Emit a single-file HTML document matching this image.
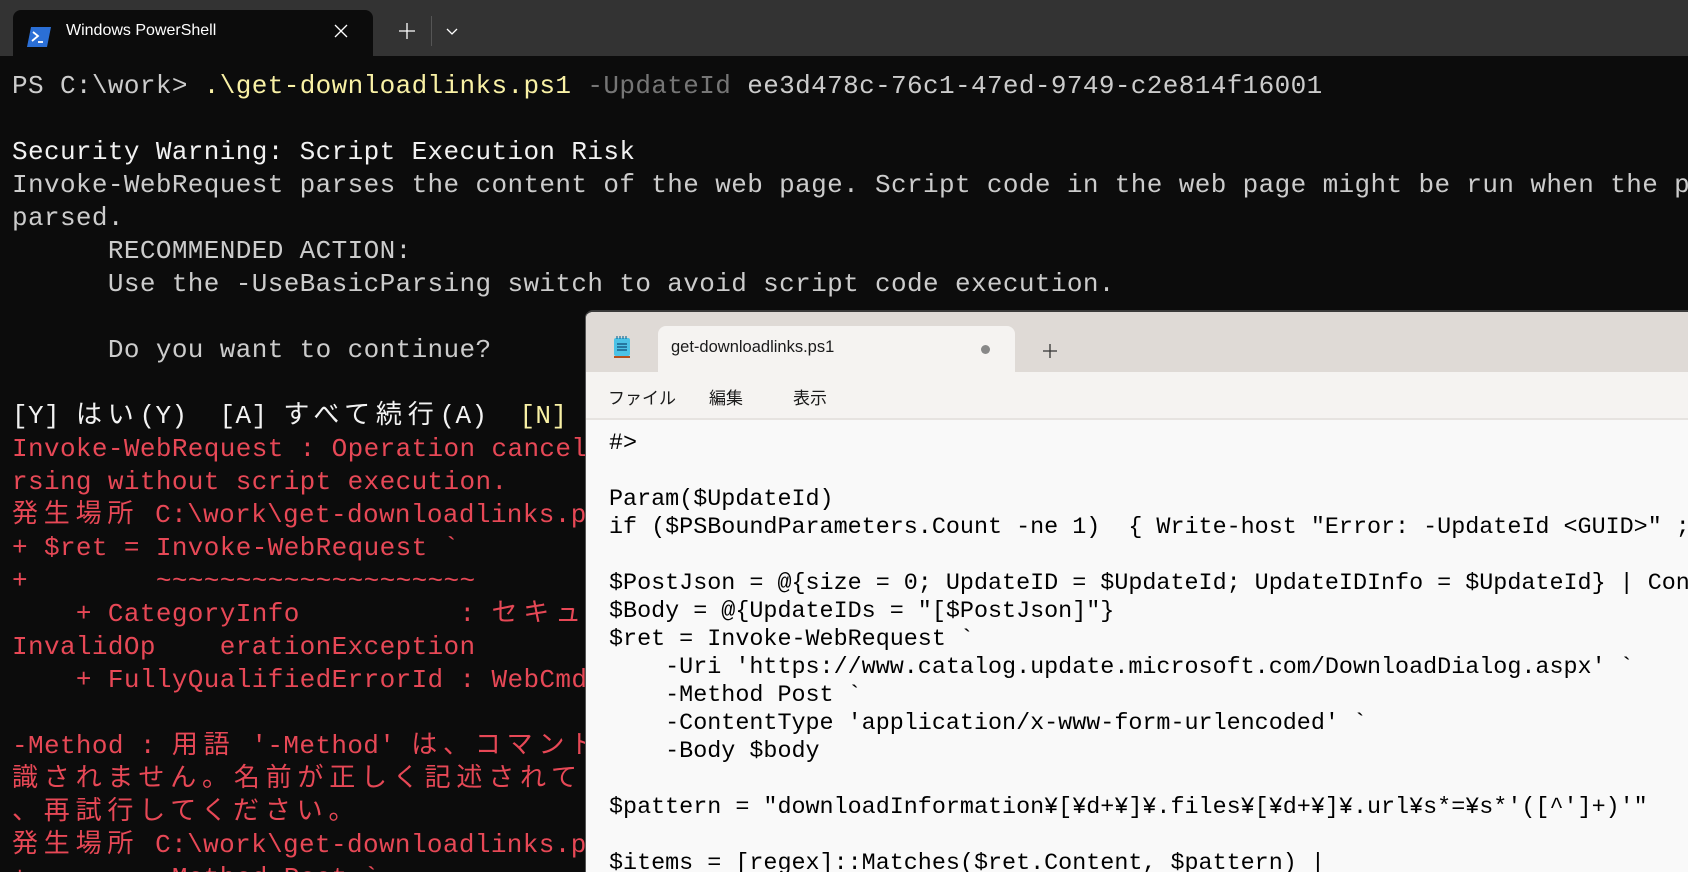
<!DOCTYPE html>
<html><head><meta charset="utf-8">
<style>
*{margin:0;padding:0;box-sizing:border-box}
html,body{width:1688px;height:872px;overflow:hidden;background:#0c0c0c}
body{position:relative;font-family:"Liberation Sans","Noto Sans CJK JP",sans-serif}
#tabbar{position:absolute;left:0;top:0;width:1688px;height:56px;background:#333}
#tab{position:absolute;left:13px;top:10px;width:360px;height:46px;background:#0c0c0c;border-radius:8px 8px 0 0}
#tab .t{position:absolute;left:53px;top:12px;color:#fff;font-size:16px}
#term{position:absolute;left:12px;top:70px;width:1676px;height:802px;overflow:hidden;font-family:"Liberation Mono","Noto Sans CJK JP",monospace;font-size:26px;line-height:33px;letter-spacing:0.38px;color:#ccc;white-space:pre}
.y{color:#f9f1a5}.g{color:#767676}.r{color:#e74856}
.w{letter-spacing:5.8px}
#np{position:absolute;left:585px;top:310px;width:1103px;height:562px;background:#f9f9f9;border-top:2px solid #3a3a3a;border-left:1px solid #555;border-radius:8px 0 0 0;overflow:hidden}
#nptabs{position:absolute;left:0;top:0;width:100%;height:60px;background:#dfdad6}
#nptab{position:absolute;left:72px;top:14px;width:357px;height:46px;background:#f5f3f1;border-radius:8px 8px 0 0}
#nptab .t{position:absolute;left:13px;top:12px;font-size:16.5px;color:#1a1a1a}
#menu{position:absolute;left:0;top:60px;width:100%;height:48px;background:#f5f3f1;border-bottom:2px solid #e6e3e0}
#menu span{position:absolute;top:12px;font-size:17px;color:#1a1a1a}
#code{position:absolute;left:23px;top:118px;font-family:"Liberation Mono","Noto Sans CJK JP",monospace;font-size:23.4px;line-height:28px;color:#000;white-space:pre}
</style></head><body>
<div id="tabbar">
 <div id="tab">
  <svg style="position:absolute;left:14px;top:17px" width="24" height="20" viewBox="0 0 24 20"><path d="M4 0H24L20 20H0Z" fill="#2b6fd6"/><path d="M6 5L11 9L5 14" stroke="#fff" stroke-width="1.8" fill="none"/><path d="M11 15H16" stroke="#fff" stroke-width="1.8"/></svg>
  <span class="t">Windows PowerShell</span>
  <svg style="position:absolute;left:321px;top:14px" width="14" height="14"><path d="M1 1L13 13M13 1L1 13" stroke="#fff" stroke-width="1.3"/></svg>
 </div>
 <svg style="position:absolute;left:399px;top:23px" width="16" height="16"><path d="M8 0V16M0 8H16" stroke="#fff" stroke-width="1.3"/></svg>
 <div style="position:absolute;left:431px;top:16px;width:1px;height:30px;background:#555"></div>
 <svg style="position:absolute;left:446px;top:28px" width="12" height="8"><path d="M1 1L6 6L11 1" stroke="#fff" stroke-width="1.3" fill="none"/></svg>
</div>
<div id="term">PS C:\work&gt; <span class="y">.\get-downloadlinks.ps1</span> <span class="g">-UpdateId</span> ee3d478c-76c1-47ed-9749-c2e814f16001

<span style="color:#f2f2f2">Security Warning: Script Execution Risk</span>
Invoke-WebRequest parses the content of the web page. Script code in the web page might be run when the page is
parsed.
      RECOMMENDED ACTION:
      Use the -UseBasicParsing switch to avoid script code execution.

      Do you want to continue?

<span style="color:#f2f2f2">[Y] <span class="w">はい</span>(Y)  [A] <span class="w">すべて続行</span>(A)  </span><span class="y">[N]</span>
<span class="r">Invoke-WebRequest : Operation canceled by user. Use the UseBasicPa
rsing without script execution.
<span class="w">発生場所</span> C:\work\get-downloadlinks.ps1:10
+ $ret = Invoke-WebRequest `
+        ~~~~~~~~~~~~~~~~~~~~
    + CategoryInfo          : <span class="w">セキュリティ</span>
InvalidOp    erationException
    + FullyQualifiedErrorId : WebCmdletIEDomNotSupportedException

-Method : <span class="w">用語</span> '-Method' <span class="w">は、コマンドレット</span>
<span class="w">識されません。名前が正しく記述されていることを確認し</span>
<span class="w">、再試行してください。</span>
<span class="w">発生場所</span> C:\work\get-downloadlinks.ps1:12
+        -Method Post `</span></div>
<div id="np">
 <div id="nptabs">
  <svg style="position:absolute;left:26px;top:23px" width="20" height="25" viewBox="0 0 20 25"><rect x="2" y="3" width="16" height="18" rx="2" fill="#4cc2e6"/><rect x="2" y="21" width="16" height="2" fill="#b5501e"/><path d="M5 1V4M8 1V4M11 1V4M14 1V4" stroke="#1a6f9a" stroke-width="1.2"/><path d="M5 9H15M5 12H15M5 15H15" stroke="#1a5f8a" stroke-width="1.4"/></svg>
  <div id="nptab"><span class="t">get-downloadlinks.ps1</span>
   <div style="position:absolute;left:323px;top:19px;width:9px;height:9px;border-radius:50%;background:#888"></div></div>
  <svg style="position:absolute;left:456px;top:31px" width="16" height="16"><path d="M8 1V15M1 8H15" stroke="#333" stroke-width="1.3"/></svg>
 </div>
 <div id="menu"><span style="left:22px">ファイル</span><span style="left:123px">編集</span><span style="left:207px">表示</span></div>
 <div id="code">#&gt;

Param($UpdateId)
if ($PSBoundParameters.Count -ne 1)  { Write-host "Error: -UpdateId &lt;GUID&gt;" ; exit }

$PostJson = @{size = 0; UpdateID = $UpdateId; UpdateIDInfo = $UpdateId} | ConvertTo-Json
$Body = @{UpdateIDs = "[$PostJson]"}
$ret = Invoke-WebRequest `
    -Uri 'https://www.catalog.update.microsoft.com/DownloadDialog.aspx' `
    -Method Post `
    -ContentType 'application/x-www-form-urlencoded' `
    -Body $body

$pattern = "downloadInformation¥[¥d+¥]¥.files¥[¥d+¥]¥.url¥s*=¥s*'([^']+)'"

$items = [regex]::Matches($ret.Content, $pattern) |</div>
</div>
</body></html>
